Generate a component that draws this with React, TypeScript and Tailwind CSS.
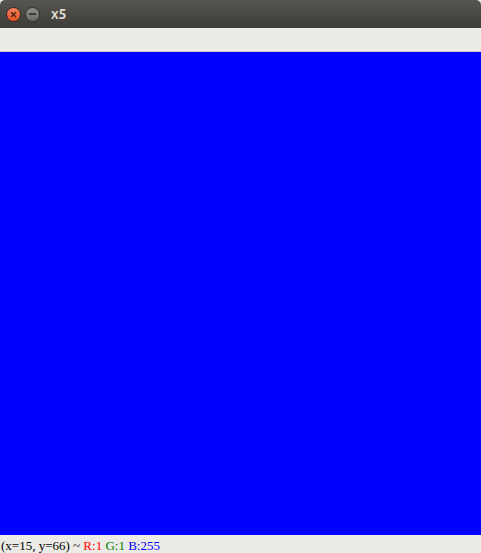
import React from "react";

export default function App() {
  return (
    <div className="w-[481px] h-[553px] flex flex-col overflow-hidden bg-[#edebe7]">
      <div className="h-[28px] shrink-0 flex items-center bg-gradient-to-b from-[#56554f] to-[#3d3c38] rounded-t-[5px] pl-[6px]">
        <div className="w-[15px] h-[15px] rounded-full bg-gradient-to-b from-[#f7835e] to-[#e0501f] flex items-center justify-center border border-[#3a2a22]">
          <svg width="7" height="7" viewBox="0 0 7 7">
            <path d="M1 1 L6 6 M6 1 L1 6" stroke="#4a1e0c" strokeWidth="1.3" />
          </svg>
        </div>
        <div className="ml-[4px] w-[15px] h-[15px] rounded-full bg-gradient-to-b from-[#8f8e8a] to-[#6b6a66] flex items-center justify-center border border-[#34332f]">
          <div className="w-[7px] h-[1.5px] bg-[#3e3d39]" />
        </div>
        <span className="ml-[11px] text-[14px] font-bold text-[#dfdbd2] font-['Ubuntu','DejaVu_Sans',sans-serif] leading-none">
          x5
        </span>
      </div>
      <div className="h-[24px] shrink-0 bg-[#edebe7] border-b border-[#c9c6c0]" />
      <div className="h-[483px] shrink-0 bg-[#0000ff]" />
      <div className="flex-1 flex items-end pl-[1px] text-[13px] leading-[15px] font-['Liberation_Serif','DejaVu_Serif',serif] text-black whitespace-pre">
        <span>
          <span>(x=15, y=66) ~ </span>
          <span className="text-[#ff0000]">R:1</span>
          <span> </span>
          <span className="text-[#008000]">G:1</span>
          <span> </span>
          <span className="text-[#0000ff]">B:255</span>
        </span>
      </div>
    </div>
  );
}
